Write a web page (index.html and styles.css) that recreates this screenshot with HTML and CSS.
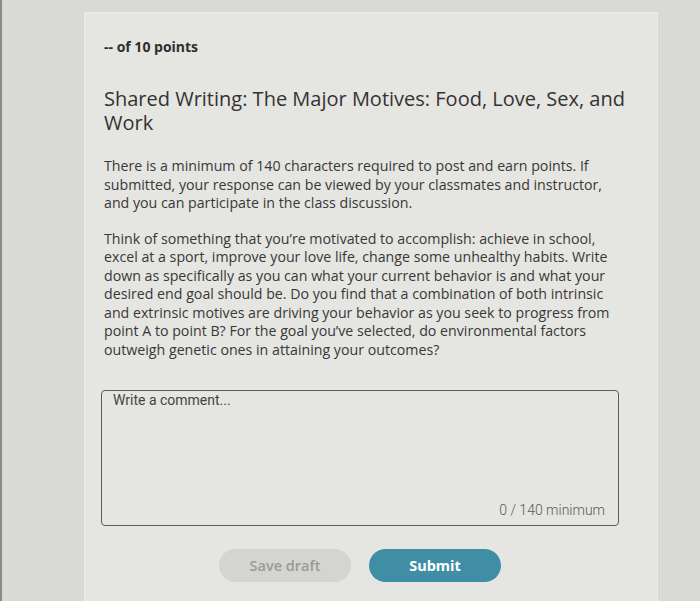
FILE: index.html
```html
<!DOCTYPE html>
<html>
<head>
<meta charset="utf-8">
<link rel="stylesheet" href="styles.css">
</head>
<body>
<div class="screen">
  <div class="card">
    <div class="points">-- of 10 points</div>
    <h1 class="title">Shared Writing: The Major Motives: Food, Love, Sex, and Work</h1>
    <p class="text first">There is a minimum of 140 characters required to post and earn points. If submitted, your response can be viewed by your classmates and instructor, and you can participate in the class discussion.</p>
    <p class="text second">Think of something that you’re motivated to accomplish: achieve in school, excel at a sport, improve your love life, change some unhealthy habits. Write down as specifically as you can what your current behavior is and what your desired end goal should be. Do you find that a combination of both intrinsic and extrinsic motives are driving your behavior as you seek to progress from point A to point B? For the goal you’ve selected, do environmental factors outweigh genetic ones in attaining your outcomes?</p>
    <div class="comment">
      <div class="placeholder">Write a comment...</div>
      <div class="counter">0 / 140 minimum</div>
    </div>
    <div class="actions">
      <button class="btn draft">Save draft</button>
      <button class="btn submit">Submit</button>
    </div>
  </div>
</div>
</body>
</html>
```
FILE: styles.css
```css
html, body {
  margin: 0;
  padding: 0;
}
body {
  width: 700px;
  height: 601px;
  overflow: hidden;
  background: #d9d9d5;
  font-family: "Open Sans", "Liberation Sans", sans-serif;
}
.screen {
  height: 601px;
  border-left: 2px solid #8a8a88;
  padding-top: 12px;
  box-sizing: border-box;
  overflow: hidden;
}
.card {
  margin-left: 82px;
  width: 574px;
  height: 600px;
  box-sizing: border-box;
  background: #e5e5e2;
  border: 1px solid #ececea;
  padding: 24px 30px 0 19px;
}
.points {
  font-size: 14px;
  font-weight: 700;
  color: #2e2e2e;
  line-height: 20px;
}
.title {
  margin: 30px 0 0 0;
  font-size: 20px;
  font-weight: 400;
  line-height: 24px;
  color: #333;
}
.text {
  margin: 0;
  font-size: 14.2px;
  line-height: 18.5px;
  color: #383838;
}
.first {
  margin-top: 22px;
}
.second {
  margin-top: 17px;
}
.comment {
  margin: 31px 0 0 -3px;
  width: 518px;
  height: 136px;
  box-sizing: border-box;
  border: 1.5px solid #5c5c5c;
  border-radius: 4px;
  padding: 1px 13px 7px 11px;
  display: flex;
  flex-direction: column;
  justify-content: space-between;
  font-family: Roboto, "Liberation Sans", sans-serif;
  font-size: 14px;
}
.placeholder {
  color: #444;
}
.counter {
  align-self: flex-end;
  color: #5a5a5a;
  font-weight: 300;
}
.actions {
  margin: 23px 0 0 -3px;
  width: 518px;
  display: flex;
  justify-content: center;
  gap: 18px;
}
.btn {
  width: 132px;
  height: 33px;
  border: none;
  border-radius: 17px;
  font-family: "Open Sans", "Liberation Sans", sans-serif;
  font-size: 14.5px;
  font-weight: 600;
}
.draft {
  background: #d4d4d1;
  color: #9a9a98;
}
.submit {
  background: #3f8ea6;
  color: #fff;
  font-weight: 700;
}
```
